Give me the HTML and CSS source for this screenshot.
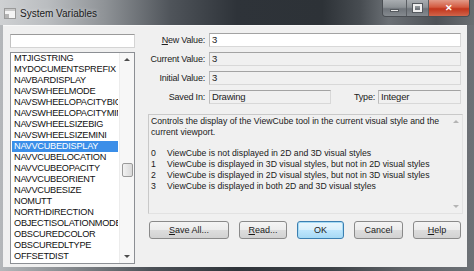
FILE: index.html
```html
<!DOCTYPE html>
<html lang="en">
<head>
    <meta charset="UTF-8">
    <title>System Variables</title>
    <link rel="stylesheet" href="styles.css">
</head>
<body>
    <div class="window">
        <div class="titlebar">
            <svg class="app-icon" width="12" height="11" viewBox="0 0 12 11">
                <rect x="0.5" y="0.5" width="11" height="10" fill="#f4f4f4" stroke="#9a9a9a"/>
                <rect x="1" y="1" width="10" height="2" fill="#c8c8c8"/>
                <rect x="1" y="6" width="4" height="4" fill="#b5b5b5"/>
            </svg>
            <span class="title">System Variables</span>
            <div class="caption-buttons">
                <span class="cap min"><i></i></span>
                <span class="cap max"><i></i></span>
                <span class="cap close">&#x2715;</span>
            </div>
        </div>

        <div class="client">
            <div class="left">
                <div class="search"></div>
                <div class="listbox">
                    <ul class="items">
                        <li>MTJIGSTRING</li>
                        <li>MYDOCUMENTSPREFIX</li>
                        <li>NAVBARDISPLAY</li>
                        <li>NAVSWHEELMODE</li>
                        <li>NAVSWHEELOPACITYBIG</li>
                        <li>NAVSWHEELOPACITYMINI</li>
                        <li>NAVSWHEELSIZEBIG</li>
                        <li>NAVSWHEELSIZEMINI</li>
                        <li class="selected">NAVVCUBEDISPLAY</li>
                        <li>NAVVCUBELOCATION</li>
                        <li>NAVVCUBEOPACITY</li>
                        <li>NAVVCUBEORIENT</li>
                        <li>NAVVCUBESIZE</li>
                        <li>NOMUTT</li>
                        <li>NORTHDIRECTION</li>
                        <li>OBJECTISOLATIONMODE</li>
                        <li>OBSCUREDCOLOR</li>
                        <li>OBSCUREDLTYPE</li>
                        <li>OFFSETDIST</li>
                    </ul>
                    <div class="vscroll">
                        <span class="arrow up"></span>
                        <div class="track">
                            <span class="thumb"></span>
                        </div>
                        <span class="arrow down"></span>
                    </div>
                </div>
            </div>

            <div class="right">
                <div class="fields">
                    <label><u>N</u>ew Value:</label>
                    <div class="box edit">3</div>

                    <label>Current Value:</label>
                    <div class="box">3</div>

                    <label>Initial Value:</label>
                    <div class="box">3</div>

                    <label>Saved In:</label>
                    <div class="split">
                        <div class="box saved">Drawing</div>
                        <label class="type-label">Type:</label>
                        <div class="box type">Integer</div>
                    </div>
                </div>

                <div class="desc">
                    <div class="desc-text">
                        <p>Controls the display of the ViewCube tool in the current visual style and the current viewport.</p>
                        <div class="opt"><span>0</span>ViewCube is not displayed in 2D and 3D visual styles</div>
                        <div class="opt"><span>1</span>ViewCube is displayed in 3D visual styles, but not in 2D visual styles</div>
                        <div class="opt"><span>2</span>ViewCube is displayed in 2D visual styles, but not in 3D visual styles</div>
                        <div class="opt"><span>3</span>ViewCube is displayed in both 2D and 3D visual styles</div>
                    </div>
                    <div class="vscroll dim">
                        <span class="arrow up"></span>
                        <div class="track"></div>
                        <span class="arrow down"></span>
                    </div>
                </div>

                <div class="buttons">
                    <button class="btn save"><u>S</u>ave All...</button>
                    <button class="btn read"><u>R</u>ead...</button>
                    <button class="btn ok">OK</button>
                    <button class="btn cancel">Cancel</button>
                    <button class="btn help"><u>H</u>elp</button>
                </div>
            </div>
        </div>
    </div>
</body>
</html>
```

FILE: styles.css
```css
* {
    box-sizing: border-box;
}

body {
    margin: 0;
    width: 474px;
    height: 271px;
    overflow: hidden;
    font-family: "Liberation Sans", Arial, sans-serif;
    background: #3a3e44;
}

.window {
    width: 474px;
    height: 271px;
    display: flex;
    flex-direction: column;
    padding: 0 7px 4px 3px;
    background: linear-gradient(90deg, #b4b7ba 0%, #8e9296 12%, #4c5157 32%, #2f343a 50%, #3d4247 70%, #5f6368 85%, #6d7176 100%);
}

/* title bar */
.titlebar {
    height: 25px;
    display: flex;
    align-items: center;
    margin-left: -3px;
    margin-right: -7px;
    padding-left: 4px;
    position: relative;
    background: linear-gradient(90deg, #cfd1d3 0%, #babdc0 10%, #8f9397 22%, #4f545a 36%, #2e3339 50%, #2d3237 68%, #474c51 76%, #6b7075 82%, #4e5257 92%, #6a6e72 100%);
}

.app-icon {
    margin-top: 2px;
}

.title {
    margin-left: 4px;
    margin-top: 2px;
    font-size: 10px;
    color: #1b1b1b;
    text-shadow: 0 0 4px rgba(255, 255, 255, 0.6);
}

.caption-buttons {
    position: absolute;
    top: 0;
    right: 4px;
    display: flex;
    height: 17px;
    border: 1px solid #4a4e53;
    border-top: none;
    border-radius: 0 0 4px 4px;
    overflow: hidden;
}

.cap {
    display: flex;
    align-items: center;
    justify-content: center;
    height: 100%;
    background: linear-gradient(180deg, #a9adb1 0%, #8d9296 45%, #6f747a 55%, #858a8f 100%);
    border-right: 1px solid #5a5e63;
}

.cap.min {
    width: 24px;
}

.cap.min i {
    width: 9px;
    height: 3px;
    margin-top: 5px;
    background: #e8e8e8;
    border: 1px solid #55595e;
}

.cap.max {
    width: 22px;
}

.cap.max i {
    width: 9px;
    height: 8px;
    border: 2px solid #eeeeee;
    outline: 1px solid #55595e;
}

.cap.close {
    width: 40px;
    border-right: none;
    color: #ffffff;
    font-size: 9px;
    font-weight: bold;
    background: linear-gradient(180deg, #e29a88 0%, #d35a40 45%, #c2351c 55%, #d0644a 100%);
}

/* client area */
.client {
    flex: 1;
    display: flex;
    gap: 13px;
    padding: 8px 4px 0 7px;
    background: #f0f0f0;
    border-top: 1px solid #f8f8f8;
}

.left {
    width: 125px;
    display: flex;
    flex-direction: column;
    gap: 4px;
}

.search {
    height: 14px;
    background: #ffffff;
    border: 1px solid #a6a6a6;
    border-color: #9a9a9a #d4d4d4 #d4d4d4 #c2c2c2;
}

.listbox {
    height: 212px;
    display: flex;
    background: #ffffff;
    border: 1px solid #8c8f94;
}

.items {
    flex: 1;
    list-style: none;
    margin: 0;
    padding: 0 1px 0 1px;
    overflow: hidden;
}

.items li {
    height: 11px;
    line-height: 11px;
    padding-left: 2px;
    font-size: 9.2px;
    letter-spacing: -0.25px;
    color: #111111;
    white-space: nowrap;
    overflow: hidden;
}

.items li.selected {
    background: #3b8ee8;
    color: #ffffff;
}

.vscroll {
    width: 15px;
    display: flex;
    flex-direction: column;
    background: #f7f7f7;
    border-left: 1px solid #ececec;
}

.vscroll .track {
    flex: 1;
    position: relative;
}

.arrow {
    height: 13px;
    display: flex;
    align-items: center;
    justify-content: center;
}

.arrow::before {
    content: "";
    border-left: 3px solid transparent;
    border-right: 3px solid transparent;
}

.arrow.up::before {
    border-bottom: 3px solid #4d4d4d;
}

.arrow.down::before {
    border-top: 3px solid #4d4d4d;
}

.thumb {
    position: absolute;
    left: 2px;
    right: 1px;
    top: 97px;
    height: 14px;
    border: 1px solid #9a9a9a;
    border-radius: 2px;
    background: linear-gradient(90deg, #f2f2f2, #d9d9d9);
}

/* right column */
.right {
    width: 315px;
    display: flex;
    flex-direction: column;
}

.fields {
    margin-top: -1px;
    display: grid;
    grid-template-columns: 57px 252px;
    column-gap: 4px;
    row-gap: 5px;
    font-size: 9px;
    letter-spacing: -0.2px;
}

.fields label {
    height: 14px;
    line-height: 14px;
    text-align: right;
    color: #222222;
    white-space: nowrap;
}

.box {
    height: 14px;
    line-height: 12px;
    padding-left: 2px;
    font-size: 9.5px;
    color: #222222;
    background: #f0f0f0;
    border: 1px solid #b9b9b9;
    border-color: #a3a3a3 #d8d8d8 #d8d8d8 #bcbcbc;
}

.box.edit {
    background: #ffffff;
}

.split {
    display: flex;
}

.box.saved {
    width: 122px;
}

.fields .type-label {
    flex: 1;
    padding-right: 3px;
}

.box.type {
    width: 83px;
}

.desc {
    margin-top: 10px;
    height: 100px;
    display: flex;
    background: #f0f0f0;
    border: 1px solid #c9c9c9;
    border-right-color: #e2e2e2;
    border-bottom-color: #e2e2e2;
}

.desc-text {
    flex: 1;
    padding: 1px 0 0 2px;
    font-size: 8.7px;
    line-height: 11px;
    color: #1a1a1a;
}

.desc-text p {
    margin: 0 0 10px;
}

.opt span {
    display: inline-block;
    width: 16px;
}

.desc .vscroll {
    width: 13px;
    background: #f0f0f0;
    border-left: none;
}

.vscroll.dim .arrow.up::before {
    border-bottom-color: #b4b4b4;
}

.vscroll.dim .arrow.down::before {
    border-top-color: #b4b4b4;
}

.buttons {
    margin-top: 7px;
    display: flex;
    gap: 10px;
    padding-left: 1px;
}

.btn {
    height: 18px;
    padding: 0;
    font-family: inherit;
    font-size: 9px;
    color: #1a1a1a;
    border: 1px solid #8a8a8a;
    border-radius: 3px;
    background: linear-gradient(180deg, #f4f4f4 0%, #ececec 48%, #dddddd 52%, #d2d2d2 100%);
}

.btn.save {
    width: 80px;
}

.btn.read {
    width: 48px;
}

.btn.ok {
    width: 47px;
    border-color: #3c7fb1;
    box-shadow: inset 0 0 0 1px #a6dbf5;
    background: linear-gradient(180deg, #eaf6fd 0%, #d9f0fc 48%, #bee6fd 52%, #a7d9f5 100%);
}

.btn.cancel {
    width: 49px;
}

.btn.help {
    width: 48px;
}
```
